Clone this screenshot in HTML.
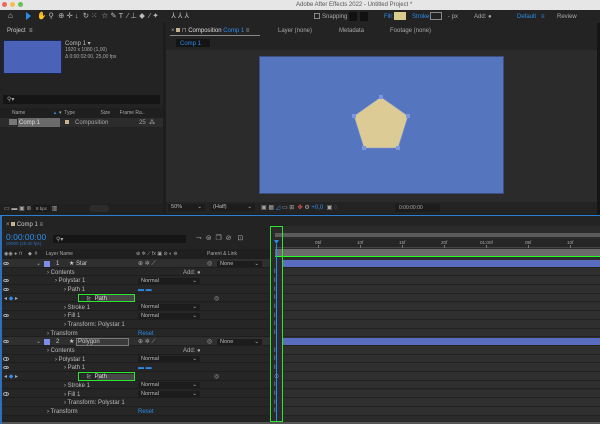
<!DOCTYPE html>
<html><head><meta charset="utf-8"><style>
*{margin:0;padding:0;box-sizing:border-box}
body{width:600px;height:424px;background:#1d1d1d;font-family:"Liberation Sans",sans-serif;font-size:6px;color:#a8a8a8;position:relative;overflow:hidden}
.a{position:absolute}
.t{position:absolute;white-space:nowrap;line-height:1}
.row{position:absolute;left:0;width:270px;height:8.7px;border-bottom:1px solid #1e1e1e;background:#262626}
.trow{position:absolute;left:283px;width:317px;height:8.7px;border-bottom:1px solid #222;background:#2f2f2f}
.dd{position:absolute;height:6px;background:#1c1c1c;border-radius:1px;color:#bbb;padding-left:3px;line-height:6px;font-size:5.6px}
.blue{color:#2d8ceb}
.eye{position:absolute;width:6px;height:3.5px;border:1px solid #aaa;border-radius:50%}
.eye:after{content:"";position:absolute;left:1.5px;top:0px;width:1.5px;height:1.5px;background:#aaa;border-radius:50%}
.tick{position:absolute;top:245px;width:1px;height:3px;background:#777}
</style></head><body>
<!-- title bar -->
<div class="a" style="left:0;top:0;width:600px;height:10px;background:#e6e6e6"></div>
<div class="a" style="left:2px;top:2px;width:5px;height:5px;border-radius:50%;background:#ed6a5e"></div>
<div class="a" style="left:10px;top:2px;width:5px;height:5px;border-radius:50%;background:#f5bf4f"></div>
<div class="a" style="left:18px;top:2px;width:5px;height:5px;border-radius:50%;background:#61c554"></div>
<div class="t" style="left:296px;top:2px;color:#555;font-size:6px">Adobe After Effects 2022 - Untitled Project *</div>
<!-- toolbar -->
<div class="a" style="left:0;top:10px;width:600px;height:13px;background:#232323"></div>
<div class="t" style="left:8px;top:12px;font-size:8px;color:#ccc">⌂</div>
<div class="a" style="left:26px;top:12px;width:0;height:0;border-left:5px solid #2d8ceb;border-top:4px solid transparent;border-bottom:4px solid transparent"></div>
<div class="t" style="left:37px;top:12px;font-size:7.5px;color:#bbb">✋ ⚲ &nbsp;⊕ ✛ ↓ &nbsp;↻ ⁙ &nbsp;☆ ✎ T &nbsp;⁄ ⊥ ◆ &nbsp;⁄ ✦ &nbsp;&nbsp;&nbsp;&nbsp;&nbsp;⅄ ⅄ ⅄</div>
<div class="a" style="left:314px;top:13px;width:6px;height:6px;border:1px solid #888"></div>
<div class="t" style="left:322px;top:14px">Snapping</div>
<div class="a" style="left:349px;top:12px;width:8px;height:9px;background:#111"></div>
<div class="a" style="left:360px;top:12px;width:8px;height:9px;background:#111"></div>
<div class="t blue" style="left:384px;top:14px">Fill:</div>
<div class="a" style="left:394px;top:12px;width:12px;height:8px;background:#d8cc8c"></div>
<div class="t blue" style="left:412px;top:14px">Stroke:</div>
<div class="a" style="left:430px;top:12px;width:12px;height:8px;border:1px solid #888;background:#222"></div>
<div class="t" style="left:448px;top:14px">- px</div>
<div class="t" style="left:474px;top:14px">Add: ●</div>
<div class="t blue" style="left:517px;top:14px">Default &nbsp;&nbsp;≡</div>
<div class="t" style="left:557px;top:14px">Review</div>
<!-- project panel -->
<div class="a" style="left:0;top:23px;width:163px;height:192px;background:#232323"></div>
<div class="t" style="left:7px;top:28px;color:#ccc">Project &nbsp;≡</div>
<div class="a" style="left:3px;top:40px;width:59px;height:34px;background:#4a63b8;border:1px solid #1a2550"></div>
<div class="t" style="left:65px;top:41px;color:#bbb">Comp 1 ▾</div>
<div class="t" style="left:65px;top:48px;font-size:5px">1920 x 1080 (1,00)</div>
<div class="t" style="left:65px;top:55px;font-size:5px">Δ 0:00:02:00, 25,00 fps</div>
<div class="a" style="left:3px;top:95px;width:157px;height:9px;background:#151515"></div>
<div class="t" style="left:7px;top:97px">⚲▾</div>
<div class="a" style="left:0;top:108px;width:163px;height:10px;background:#1f1f1f"></div>
<div class="t" style="left:12px;top:111px;font-size:5px">Name <span class="blue" style="margin-left:27px">▴</span> &nbsp;▾&nbsp; Type <span style="margin-left:24px">Size</span> <span style="margin-left:8px">Frame Ra..</span></div>
<div class="a" style="left:0;top:118px;width:163px;height:9px;background:#2c2c2c"></div>
<div class="a" style="left:18px;top:118px;width:42px;height:9px;background:#6a6a6a"></div>
<div class="a" style="left:9px;top:119px;width:8px;height:6px;background:#777"></div>
<div class="t" style="left:19px;top:120px;color:#ddd">Comp 1</div>
<div class="a" style="left:65px;top:120px;width:4px;height:4px;background:#c8b48a"></div>
<div class="t" style="left:75px;top:120px">Composition</div>
<div class="t" style="left:139px;top:120px">25 &nbsp;⁂</div>
<div class="a" style="left:0;top:204px;width:163px;height:11px;background:#202020"></div>
<div class="t" style="left:4px;top:206px;font-size:6px">▭ ▬ ▣ ⊛ <span style="font-size:4.5px;background:#1a1a1a;padding:1px 3px">8 bpc</span> ▥</div>
<div class="a" style="left:89px;top:205px;width:20px;height:7px;border-radius:4px;background:#2c2c2c"></div>
<!-- comp panel -->
<div class="a" style="left:166px;top:23px;width:431px;height:27px;background:#232323"></div>
<div class="t" style="left:171px;top:28px">× <span style="display:inline-block;width:4px;height:4px;background:#c8b48a"></span> ⊓ <span style="color:#ddd">Composition</span> <span class="blue">Comp 1</span> ≡</div>
<div class="a" style="left:170px;top:35px;width:90px;height:1px;background:#888"></div>
<div class="t" style="left:278px;top:28px">Layer (none)</div>
<div class="t" style="left:339px;top:28px">Metadata</div>
<div class="t" style="left:390px;top:28px">Footage (none)</div>
<div class="a" style="left:176px;top:39px;width:34px;height:8px;background:#141414"></div>
<div class="t blue" style="left:180px;top:41px">Comp 1</div>
<div class="a" style="left:166px;top:50px;width:431px;height:152px;background:#2b2b2b"></div>
<div class="a" style="left:259px;top:56px;width:245px;height:138px;background:#5675bf;border:1px solid #3d4e80"></div>
<svg class="a" style="left:0;top:0" width="600" height="424"><polygon points="381,97 408,116 398,148 364,148 354,116" fill="#dccb94" stroke="#7d96d8" stroke-width="0.6"/>
<g fill="#7d96e0"><rect x="379" y="95" width="4" height="4"/><rect x="406" y="114" width="4" height="4"/><rect x="396" y="146" width="4" height="4"/><rect x="362" y="146" width="4" height="4"/><rect x="352" y="114" width="4" height="4"/></g></svg>
<div class="a" style="left:166px;top:202px;width:431px;height:12px;background:#232323"></div>
<div class="dd" style="left:168px;top:204px;width:37px;height:7px">50% <span style="float:right;margin-right:3px">⌄</span></div>
<div class="dd" style="left:210px;top:204px;width:45px;height:7px">(Half) <span style="float:right;margin-right:3px">⌄</span></div>
<div class="t" style="left:261px;top:205px;font-size:6px">▣ ▦ <span class="blue">◿</span> ▭ ⊞ &nbsp;<span style="color:#d55">✤</span> ⚙ <span class="blue">+0,0</span> &nbsp;▣ ◌</div>
<div class="a" style="left:395px;top:204px;width:45px;height:8px;background:#1c1c1c"></div>
<div class="t" style="left:399px;top:206px;font-size:5px">0:00:00:00</div>
<div class="a" style="left:597px;top:23px;width:3px;height:192px;background:#151515"></div>
<!-- blue separator -->
<div class="a" style="left:0;top:215px;width:600px;height:1px;background:#2d7fd6"></div>
<!-- timeline -->
<div class="a" style="left:0;top:216px;width:600px;height:208px;background:#232323"></div>
<div class="t" style="left:6px;top:222px">× <span style="display:inline-block;width:4px;height:4px;background:#c8b48a"></span> <span style="color:#ccc">Comp 1</span> ≡</div>
<div class="t blue" style="left:6px;top:233px;font-size:8.5px">0:00:00:00</div>
<div class="t" style="left:6px;top:242px;font-size:4.5px;color:#2d6fb8">00000 (25.00 fps)</div>
<div class="a" style="left:53px;top:235px;width:133px;height:8px;background:#151515"></div>
<div class="t" style="left:56px;top:237px">⚲▾</div>
<div class="t" style="left:196px;top:235px;font-size:7px;color:#aaa">⇁ &nbsp;⊜ &nbsp;❐ &nbsp;⊘ &nbsp;&nbsp;⊡</div>
<div class="a" style="left:0;top:249px;width:270px;height:10px;background:#1f1f1f"></div>
<div class="t" style="left:4px;top:252px;font-size:5px">◉◉ ● ⊓ &nbsp;&nbsp;&nbsp;◆ &nbsp;# &nbsp;&nbsp;&nbsp;&nbsp;&nbsp;Layer Name</div>
<div class="t" style="left:136px;top:252px;font-size:5px">⊕ ✲ ⟋ fx ▣ ⊘ ◐ ⊜</div>
<div class="t" style="left:207px;top:252px;font-size:5px">Parent &amp; Link</div>
<!-- timeline right -->
<div class="a" style="left:272px;top:226px;width:328px;height:198px;background:#2b2b2b"></div>
<div class="a" style="left:275px;top:233px;width:325px;height:4px;background:#5b5b5b"></div>
<div class="a" style="left:275px;top:239px;width:325px;height:9px;background:#262626;border-bottom:1px solid #444"></div>
<div class="t" style="left:315px;top:241px;font-size:4.6px">05f</div>
<div class="t" style="left:357px;top:241px;font-size:4.6px">10f</div>
<div class="t" style="left:399px;top:241px;font-size:4.6px">15f</div>
<div class="t" style="left:441px;top:241px;font-size:4.6px">20f</div>
<div class="t" style="left:480px;top:241px;font-size:4.6px">01:00f</div>
<div class="t" style="left:525px;top:241px;font-size:4.6px">05f</div>
<div class="t" style="left:567px;top:241px;font-size:4.6px">10f</div>
<div class="tick" style="left:318px"></div><div class="tick" style="left:360px"></div><div class="tick" style="left:402px"></div><div class="tick" style="left:444px"></div><div class="tick" style="left:486px"></div><div class="tick" style="left:528px"></div><div class="tick" style="left:570px"></div>
<div class="a" style="left:275px;top:249px;width:325px;height:8px;background:#6b6b6b;border-bottom:1px solid #2f2"></div>
<div class="a" style="left:274px;top:240px;width:5px;height:4px;background:#2d8ceb;clip-path:polygon(0 0,100% 0,50% 100%)"></div>
<div class="a" style="left:276px;top:244px;width:1px;height:178px;background:#2d8ceb"></div>
<!-- rows -->
<div id="rows"></div>
<script>
var L=[
[0,1,'Star',1],[1,0,'Contents'],[2,0,'Polystar 1',0,'Normal'],[3,0,'Path 1',0,'sw'],[4,0,'Path',0,'path'],[3,0,'Stroke 1',0,'Normal'],[3,0,'Fill 1',0,'Normal'],[3,0,'Transform: Polystar 1'],[1,0,'Transform',0,'reset'],
[0,2,'Polygon',1],[1,0,'Contents'],[2,0,'Polystar 1',0,'Normal'],[3,0,'Path 1',0,'sw'],[4,0,'Path',0,'path'],[3,0,'Stroke 1',0,'Normal'],[3,0,'Fill 1',0,'Normal'],[3,0,'Transform: Polystar 1'],[1,0,'Transform',0,'reset']];
var h='';
function eye(t){return '<div class="eye" style="left:3px;top:'+(t+2.5)+'px"></div>';}
L.forEach(function(r,i){var y=(259+i*8.7).toFixed(1);var top=+y;
var isL=r[3];
h+='<div class="row" style="top:'+y+'px;'+(isL?'background:#2f2f2f':'')+'"></div>';
h+='<div class="trow" style="top:'+y+'px"></div>';
if(isL){h+='<div class="a" style="left:283px;top:'+(top+1)+'px;width:317px;height:6.5px;background:#5a6cc0"></div>';
h+=eye(top)+'<div class="a" style="left:44px;top:'+(top+1.5)+'px;width:6px;height:6px;background:#7b8ee8"></div><div class="t" style="left:36px;top:'+(top+2)+'px">⌄</div><div class="t" style="left:56px;top:'+(top+2)+'px;color:#ccc">'+r[1]+'</div><div class="t" style="left:69px;top:'+(top+2)+'px;color:#ccc">★ '+(r[1]==2?'<span style="border:1px solid #777;background:#3a3a3a;padding:0 28px 0 1px">Polygon</span>':r[2])+'</div>';
h+='<div class="t" style="left:138px;top:'+(top+2)+'px">⊕ ✲ ⟋</div><div class="t" style="left:207px;top:'+(top+2)+'px">◎</div><div class="dd" style="left:217px;top:'+(top+1.5)+'px;width:45px">None<span style="float:right;margin-right:3px">⌄</span></div>';}
else{var x=[0,47,55,64,88][r[0]];
if(r[4]!='path')h+='<div class="t" style="left:'+(x)+'px;top:'+(top+2)+'px;color:#bbb">'+(r[0]==0?'':'› ')+r[2]+'</div>';
if(r[2]=='Contents')h+='<div class="t" style="left:183px;top:'+(top+2)+'px">Add: ●</div>';
if(r[4]=='Normal'){h+='<div class="dd" style="left:138px;top:'+(top+1.5)+'px;width:62px">Normal<span style="float:right;margin-right:3px">⌄</span></div>';}
if(r[4]=='sw')h+='<div class="t blue" style="left:138px;top:'+(top+2)+'px">▬ ▬</div>';
if(r[4]=='reset')h+='<div class="t blue" style="left:138px;top:'+(top+2)+'px">Reset</div>';
if(r[2]=='Polystar 1'||r[2]=='Path 1'||r[2]=='Fill 1')h+=eye(top);
if(r[4]=='path'){h+='<div class="t" style="left:4px;top:'+(top+2)+'px">◂ <span class="blue">◆</span> ▸</div><div class="a" style="left:78px;top:'+(top)+'px;width:57px;height:8.5px;border:1.5px solid #2ee62e"></div><div class="a" style="left:97px;top:'+(top+1.5)+'px;width:37px;height:6px;background:#474747"></div><div class="t" style="left:81px;top:'+(top+2)+'px"><span class="blue">◌</span> ⊵ &nbsp;<span style="color:#ddd">Path</span></div><div class="t" style="left:214px;top:'+(top+2)+'px">◎</div>';}
h+='<div class="t" style="left:274px;top:'+(top+1.5)+'px;color:#6fa0e8;font-size:6px">'+(r[4]=='path'&&i>9?'⊙':'I')+'</div>';}
});
document.getElementById('rows').innerHTML=h;
</script>
<div class="a" style="left:270px;top:226px;width:13px;height:196px;border:1.5px solid #2ee62e"></div>
<div class="a" style="left:0;top:422px;width:600px;height:2px;background:#555"></div>
<div class="a" style="left:0;top:216px;width:2px;height:208px;background:#2d6fb8"></div>
</body></html>
